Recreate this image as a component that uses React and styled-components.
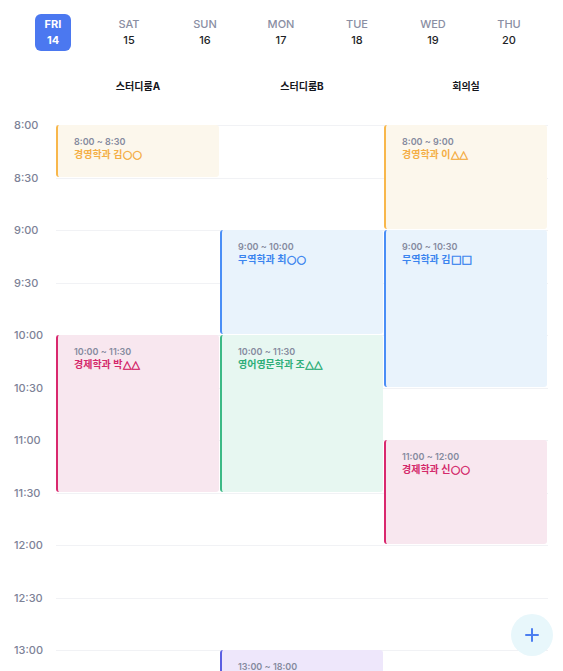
import React from 'react';
import styled, { createGlobalStyle } from 'styled-components';

const GlobalStyle = createGlobalStyle`
  html, body {
    margin: 0;
    padding: 0;
    background: #ffffff;
    font-family: 'Inter', 'Noto Sans CJK KR', sans-serif;
    color: #1d1f27;
  }
`;

const SLOT = 52.5;

const COLORS = {
  orange: { line: '#f8b74b', bg: '#fcf7ec', text: '#f4ae45' },
  blue: { line: '#4a8ef6', bg: '#e9f3fc', text: '#3b84ef' },
  pink: { line: '#d9286e', bg: '#f8e7ef', text: '#d4296b' },
  green: { line: '#3cb986', bg: '#e7f7f1', text: '#2eae78' },
  purple: { line: '#5b5fe2', bg: '#eee7fb', text: '#5b5fe2' },
};

const days = [
  { name: 'FRI', date: 14 },
  { name: 'SAT', date: 15 },
  { name: 'SUN', date: 16 },
  { name: 'MON', date: 17 },
  { name: 'TUE', date: 18 },
  { name: 'WED', date: 19 },
  { name: 'THU', date: 20 },
];

const rooms = ['스터디룸A', '스터디룸B', '회의실'];

const reservations = [
  { room: 0, start: '8:00', end: '8:30', who: '경영학과 김○○', color: 'orange' },
  { room: 2, start: '8:00', end: '9:00', who: '경영학과 이△△', color: 'orange' },
  { room: 1, start: '9:00', end: '10:00', who: '무역학과 최○○', color: 'blue' },
  { room: 2, start: '9:00', end: '10:30', who: '무역학과 김□□', color: 'blue' },
  { room: 0, start: '10:00', end: '11:30', who: '경제학과 박△△', color: 'pink' },
  { room: 1, start: '10:00', end: '11:30', who: '영어영문학과 조△△', color: 'green' },
  { room: 2, start: '11:00', end: '12:00', who: '경제학과 신○○', color: 'pink' },
  { room: 1, start: '13:00', end: '18:00', who: '무역학과 정○○', color: 'purple' },
];

const FIRST_HOUR = 8;
const slots = [];
for (let h = FIRST_HOUR; h < 19; h++) {
  slots.push(`${h}:00`, `${h}:30`);
}

const toSlot = (t) => {
  const [h, m] = t.split(':').map(Number);
  return (h - FIRST_HOUR) * 2 + (m >= 30 ? 1 : 0);
};

// split the visible part of a name from its masked tail (○○, △△, □□)
const splitMask = (who) => {
  const m = who.match(/^(.*?)([○△□]+)$/);
  return m ? [m[1], m[2]] : [who, ''];
};

const Page = styled.div`
  width: 563px;
  padding-bottom: 40px;
`;

const DayStrip = styled.div`
  display: grid;
  grid-template-columns: repeat(7, 76px);
  padding: 14px 15px 0;
`;

const Day = styled.div`
  justify-self: center;
  display: flex;
  flex-direction: column;
  align-items: center;
  padding: 2px 10px 3px;
  border-radius: 6px;
  background: ${(p) => (p.$active ? '#4b78f0' : 'transparent')};
  color: ${(p) => (p.$active ? '#ffffff' : '#1d1f27')};
  font-size: 11px;
  line-height: 16px;
  font-weight: ${(p) => (p.$active ? 700 : 500)};
`;

const DayName = styled.span`
  color: ${(p) => (p.$active ? '#ffffff' : '#8a8ea3')};
`;

const RoomHeader = styled.div`
  display: grid;
  grid-template-columns: 56px repeat(3, 164px);
  margin-top: 25px;
  line-height: 20px;
`;

const RoomName = styled.div`
  text-align: center;
  font-size: 10px;
  font-weight: 700;
  color: #15161c;
`;

const Schedule = styled.div`
  display: grid;
  grid-template-columns: 56px repeat(3, 164px);
  grid-template-rows: repeat(${slots.length}, ${SLOT}px);
  margin-top: 29px;
`;

const TimeLabel = styled.div`
  grid-column: 1;
  padding-left: 14px;
  font-size: 11px;
  font-weight: 500;
  color: #7d8297;
  line-height: 14px;
  transform: translateY(-7px);
`;

const SlotLine = styled.div`
  grid-column: 2 / 5;
  border-top: 1px solid #f1f2f5;
`;

const Booking = styled.div`
  position: relative;
  z-index: 1;
  margin: 0 1px 1px 0;
  padding: 11px 0 0 16px;
  border-left: 2px solid ${(p) => COLORS[p.$color].line};
  border-radius: 3px;
  background: ${(p) => COLORS[p.$color].bg};
  overflow: hidden;
`;

const BookingTime = styled.div`
  font-size: 9px;
  line-height: 12px;
  font-weight: 600;
  color: #858a9e;
`;

const BookingWho = styled.div`
  font-size: 10px;
  line-height: 13px;
  font-weight: 700;
  white-space: nowrap;
  color: ${(p) => COLORS[p.$color].text};
`;

/* masked name marks, a touch larger and heavier than the fallback glyphs */
const Mask = styled.span`
  font-family: 'DejaVu Sans', sans-serif;
  font-size: 11px;
  font-weight: 700;
  line-height: 13px;
  letter-spacing: 0.2px;
  margin-left: 0.5px;
  -webkit-text-stroke: 0.45px currentColor;
`;

const AddButton = styled.button`
  position: fixed;
  right: 10px;
  bottom: 15px;
  width: 42px;
  height: 42px;
  border: none;
  border-radius: 50%;
  background: #e8f7fb;
  display: flex;
  align-items: center;
  justify-content: center;
  padding: 0;
  cursor: pointer;
  z-index: 5;
`;

const App = () => {
  return (
    <Page>
      <GlobalStyle />
      <DayStrip>
        {days.map((d, i) => (
          <Day key={d.name} $active={i === 0}>
            <DayName $active={i === 0}>{d.name}</DayName>
            <span>{d.date}</span>
          </Day>
        ))}
      </DayStrip>

      <RoomHeader>
        <div />
        {rooms.map((r) => (
          <RoomName key={r}>{r}</RoomName>
        ))}
      </RoomHeader>

      <Schedule>
        {slots.map((s, i) => (
          <React.Fragment key={s}>
            <TimeLabel style={{ gridRow: i + 1 }}>{s}</TimeLabel>
            <SlotLine style={{ gridRow: i + 1 }} />
          </React.Fragment>
        ))}
        {reservations.map((r) => {
          const from = toSlot(r.start);
          const to = toSlot(r.end);
          const [name, mask] = splitMask(r.who);
          return (
            <Booking
              key={`${r.room}-${r.start}`}
              $color={r.color}
              style={{ gridColumn: r.room + 2, gridRow: `${from + 1} / ${to + 1}` }}
            >
              <BookingTime>
                {r.start} ~ {r.end}
              </BookingTime>
              <BookingWho $color={r.color}>
                {name}
                {mask && <Mask>{mask}</Mask>}
              </BookingWho>
            </Booking>
          );
        })}
      </Schedule>

      <AddButton aria-label="예약 추가">
        <svg width="14" height="14" viewBox="0 0 14 14">
          <path d="M7 1v12M1 7h12" stroke="#4b7ef0" strokeWidth="2" strokeLinecap="round" />
        </svg>
      </AddButton>
    </Page>
  );
};

export default App;
